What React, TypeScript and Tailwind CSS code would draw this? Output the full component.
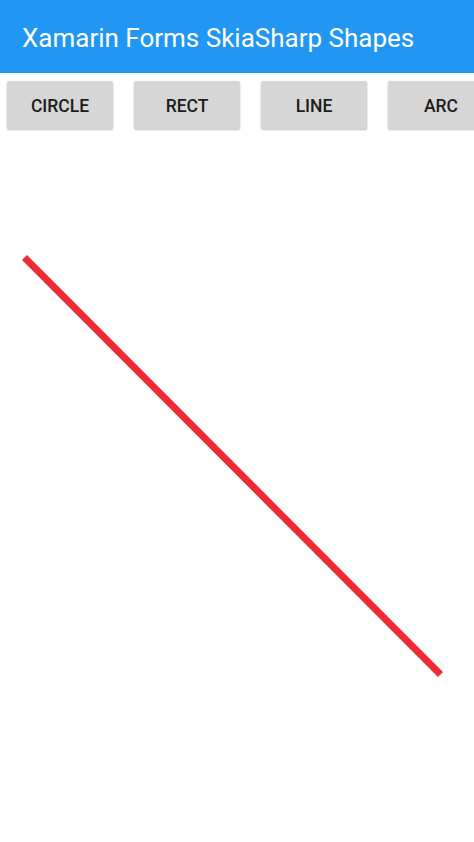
import React from 'react';

const shapes = ['CIRCLE', 'RECT', 'LINE', 'ARC'];

export default function App() {
  return (
    <div className="h-[842px] w-full flex flex-col bg-white overflow-hidden" style={{ fontFamily: 'Roboto, "Noto Sans", sans-serif' }}>
      <header className="h-[73px] flex items-center px-[22px] bg-[#2196f3] flex-shrink-0">
        <h1 className="text-[26px] text-white leading-none whitespace-nowrap pt-[2px]">Xamarin Forms SkiaSharp Shapes</h1>
      </header>

      <div className="flex gap-[21px] pl-[7px] pt-2 pb-2 flex-shrink-0">
        {shapes.map((s) => (
          <button
            key={s}
            type="button"
            className="h-12 w-[106px] flex-shrink-0 rounded-[2px] bg-[#d6d6d6] text-[17.5px] font-medium text-[#1c1c1c] pt-[2px] shadow-[0_1px_2px_rgba(0,0,0,0.25)]"
          >
            {s}
          </button>
        ))}
      </div>

      <div className="flex-1 min-h-0">
        <svg width="474" height="705" viewBox="0 0 474 705" className="block">
          <line x1="24.5" y1="120.5" x2="440.5" y2="537.5" stroke="#ee2a33" strokeWidth="7" />
        </svg>
      </div>
    </div>
  );
}
